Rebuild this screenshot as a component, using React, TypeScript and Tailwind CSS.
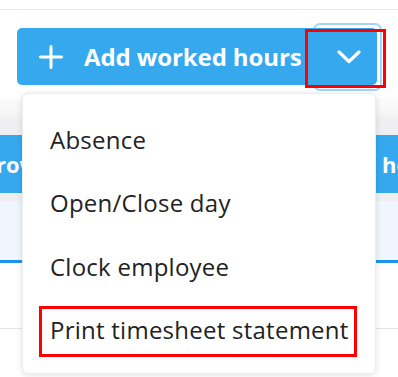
import React from "react";

export default function App() {
  const items = ["Absence", "Open/Close day", "Clock employee", "Print timesheet statement"];
  return (
    <div className="relative w-[398px] h-[377px] overflow-hidden bg-white font-['Open_Sans',sans-serif]">
      <div className="h-[10px] border-b border-[#ececee]" />
      <div className="h-[88px] pt-[18px] pl-[17px]">
        <div className="relative flex w-[360px] h-[57px]">
          <div className="absolute left-[296px] top-[-5px] w-[69px] h-[68px] rounded-[7px] border-2 border-[#a6d4f5]" />
          <div className="relative flex items-center pl-[22px] w-[288px] h-full rounded-l-[5px] bg-[#35a8ee] text-white">
            <svg width="24" height="24" viewBox="0 0 24 24" className="shrink-0">
              <path d="M12 1.5V22.5M1.5 12H22.5" stroke="white" strokeWidth="3" strokeLinecap="round" fill="none" />
            </svg>
            <span className="ml-[21px] text-[24px] font-bold leading-none tracking-[-0.1px]">Add worked hours</span>
          </div>
          <div className="relative flex items-center justify-center pl-[15px] w-[72px] h-full rounded-r-[5px] bg-[#35a8ee]">
            <svg width="24" height="14" viewBox="0 0 24 14">
              <path d="M2 2L12 11.5L22 2" stroke="white" strokeWidth="3.2" strokeLinecap="round" strokeLinejoin="round" fill="none" />
            </svg>
          </div>
        </div>
      </div>
      <div className="h-[20px] bg-gradient-to-b from-[#fcfcfc] to-[#f3f3f4]" />
      <div className="h-[17px] bg-[#efeff1]" />
      <div className="h-[58px] bg-[#35a8ee] flex items-center justify-between text-white text-[22px] font-bold leading-[22px]">
        <span className="ml-[-4px]">row</span>
        <span className="w-[16px] whitespace-nowrap">hours</span>
      </div>
      <div className="h-[8px] bg-[#efeff1]" />
      <div className="h-[59px] bg-[#f0f6fd]" />
      <div className="h-[3px] bg-[#1f93f2]" />
      <div className="h-[65px] bg-white" />
      <div className="border-t border-[#e6e6e6]" />

      <div className="absolute left-[22px] top-[93px] w-[354px] h-[281px] rounded-[6px] bg-white border border-[#ededed] shadow-[0_1px_6px_rgba(0,0,0,0.12)] pt-[14px]">
        {items.map((t) => (
          <div key={t} className="h-[63.5px] flex items-center pl-[27px] text-[24px] leading-none tracking-[0.25px] text-[#222222]">
            {t}
          </div>
        ))}
      </div>

      <div className="absolute left-[305px] top-[29px] w-[81px] h-[59px] border-[3px] border-[#ff0000]" />
      <div className="absolute left-[39px] top-[306px] w-[318px] h-[51px] border-[3px] border-[#ff0000]" />
    </div>
  );
}
